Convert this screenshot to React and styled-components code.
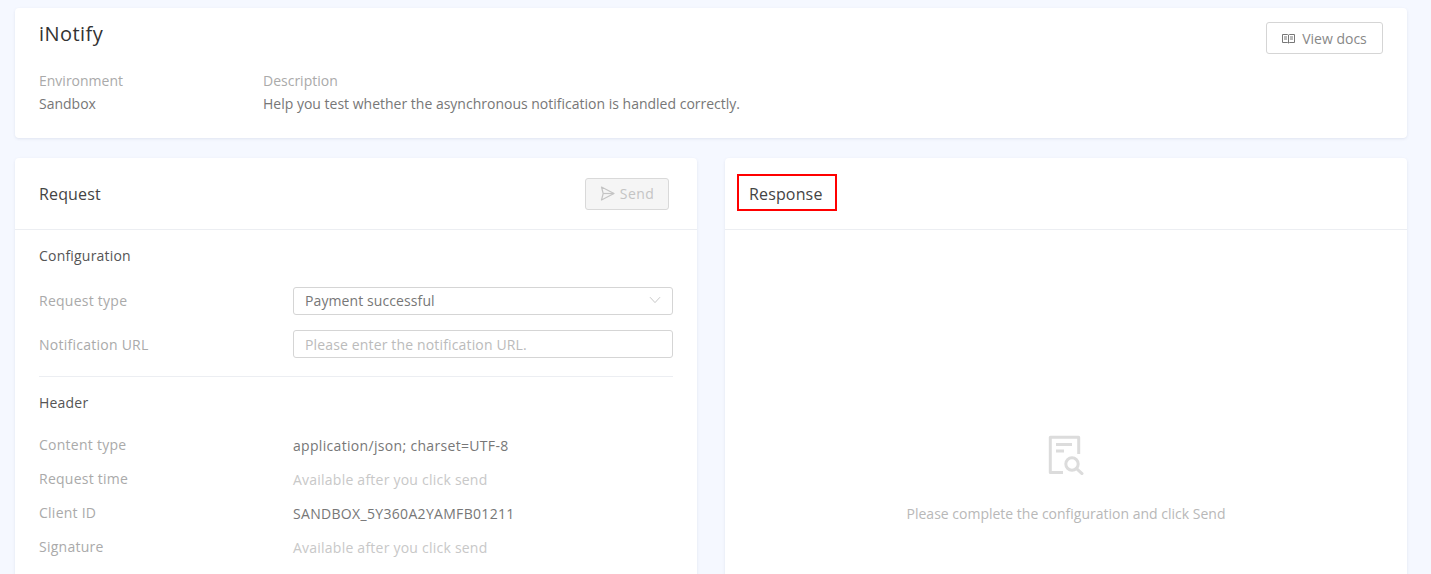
import React from 'react';
import styled, { createGlobalStyle } from 'styled-components';

const GlobalStyle = createGlobalStyle`
  html, body {
    margin: 0;
    height: 574px;
    overflow: hidden;
    background: #f5f8ff;
    font-family: "Open Sans", "Noto Sans", sans-serif;
    font-size: 14px;
    color: #666;
  }
  * { box-sizing: border-box; }
`;

const Page = styled.div`
  padding: 8px 24px 0 15px;
  display: flex;
  flex-direction: column;
  gap: 20px;
`;

const Card = styled.section`
  background: #fff;
  border-radius: 4px;
  box-shadow: 0 1px 3px rgba(40, 60, 110, 0.1);
`;

const InfoCard = styled(Card)`
  height: 130px;
  padding: 14px 24px 0;
`;

const InfoTop = styled.div`
  display: flex;
  align-items: flex-start;
  justify-content: space-between;
`;

const AppTitle = styled.h1`
  margin: 0;
  font-size: 20px;
  line-height: 24px;
  font-weight: 400;
  letter-spacing: 0.45px;
  color: #333;
`;

const DocsButton = styled.button`
  width: 117px;
  height: 32px;
  display: flex;
  align-items: center;
  justify-content: center;
  gap: 7px;
  background: #fff;
  border: 1px solid #d5d5d5;
  border-radius: 3px;
  font: inherit;
  color: #888;
`;

const InfoColumns = styled.div`
  display: grid;
  grid-template-columns: 224px 1fr;
  margin-top: 15px;
  line-height: 23px;
`;

const InfoLabel = styled.div`
  color: #aaa;
`;

const InfoValue = styled.div`
  color: #777;
`;

const Panels = styled.div`
  display: grid;
  grid-template-columns: 682px 682px;
  gap: 28px;
`;

const Panel = styled(Card)`
  height: 600px;
`;

const PanelHeader = styled.header`
  height: 72px;
  display: flex;
  align-items: center;
  justify-content: space-between;
  padding: 0 28px 0 24px;
  border-bottom: 1px solid #eceef2;
`;

const PanelTitle = styled.h2`
  margin: 0;
  font-size: 16px;
  line-height: 22px;
  font-weight: 400;
  letter-spacing: 0.15px;
  color: #444;
`;

const HighlightTitle = styled(PanelTitle)`
  width: 100px;
  height: 37px;
  margin: 0 0 2px -12px;
  padding: 2px 0 0 10px;
  display: flex;
  align-items: center;
  border: 2px solid #f00;
`;

const SendButton = styled.button`
  width: 84px;
  height: 32px;
  display: flex;
  align-items: center;
  justify-content: center;
  gap: 5px;
  background: #f5f5f5;
  border: 1px solid #d9d9d9;
  border-radius: 3px;
  font: inherit;
  letter-spacing: 0.4px;
  color: #c4c4c4;
`;

const PanelBody = styled.div`
  padding: 15px 24px 0;
`;

const SectionTitle = styled.h3`
  margin: 0;
  font-size: 14px;
  line-height: 22px;
  font-weight: 400;
  letter-spacing: 0.2px;
  color: #555;
`;

const FieldLabel = styled.div`
  padding-bottom: ${(p) => (p.$raised ? '2px' : '0')};
  letter-spacing: 0.25px;
  color: #aaa;
`;

const FormRows = styled.div`
  margin-top: 20px;
  display: flex;
  flex-direction: column;
  gap: 15px;
`;

const FormRow = styled.div`
  display: grid;
  grid-template-columns: 254px 380px;
  align-items: center;
`;

const Control = styled.div`
  height: 28px;
  display: flex;
  align-items: center;
  justify-content: space-between;
  padding: 0 11px ${(p) => (p.$placeholder ? '0' : '2px')};
  background: #fff;
  border: 1px solid #d5d5d5;
  border-radius: 3px;
  letter-spacing: ${(p) => (p.$placeholder ? '0.15px' : '0.1px')};
  color: ${(p) => (p.$placeholder ? '#bbb' : '#777')};
`;

const Divider = styled.hr`
  margin: 18px 0 15px;
  border: 0;
  border-top: 1px solid #eceef2;
`;

const DetailRows = styled.div`
  margin-top: 14px;
  display: flex;
  flex-direction: column;
`;

const DetailRow = styled.div`
  height: 34px;
  display: grid;
  grid-template-columns: 254px 1fr;
  align-items: center;
`;

const DetailValue = styled.div`
  letter-spacing: ${(p) => (p.$muted ? '0.23px' : '0.32px')};
  color: ${(p) => (p.$muted ? '#c8c8c8' : '#777')};
`;

const EmptyState = styled.div`
  padding-top: 205px;
  display: flex;
  flex-direction: column;
  align-items: center;
  gap: 29px;
  color: #b8b8b8;
`;

const BookIcon = () => (
  <svg width="13" height="11" viewBox="0 0 13 11" fill="none" stroke="#777" strokeWidth="1">
    <path d="M.5 1.5h5l1 .6 1-.6h5v8h-5l-1 .5-1-.5h-5z" />
    <path d="M6.5 2v8M2 4h3M2 6h3M8 4h3M8 6h3" />
  </svg>
);

const SendIcon = () => (
  <svg width="15" height="15" viewBox="0 0 15 15" fill="none" stroke="#c4c4c4" strokeWidth="1.2" strokeLinejoin="round">
    <path d="M1.5 1 14 7.5 1.5 14 3.2 7.5z" />
    <path d="M3.2 7.5H14" />
  </svg>
);

const Chevron = () => (
  <svg width="12" height="8" viewBox="0 0 12 8" fill="none" stroke="#c8c8c8" strokeWidth="1">
    <path d="M1 1.2 6 6.6l5-5.4" />
  </svg>
);

const EmptyIcon = () => (
  <svg width="36" height="40" viewBox="0 0 36 40" fill="none" stroke="#dcdcdc" strokeWidth="3">
    <path d="M15 37.5H2.3V2.3h28.4V19" strokeLinejoin="round" />
    <path d="M8 9.5h16M8 16h8" />
    <circle cx="24" cy="29" r="6.2" />
    <path d="M28.6 33.6 34 38.6" strokeLinecap="round" />
  </svg>
);

const details = [
  { label: 'Content type', value: 'application/json; charset=UTF-8' },
  { label: 'Request time', value: 'Available after you click send', muted: true },
  { label: 'Client ID', value: 'SANDBOX_5Y360A2YAMFB01211' },
  { label: 'Signature', value: 'Available after you click send', muted: true },
];

export default function App() {
  return (
    <>
      <GlobalStyle />
      <Page>
        <InfoCard>
          <InfoTop>
            <AppTitle>iNotify</AppTitle>
            <DocsButton>
              <BookIcon />
              View docs
            </DocsButton>
          </InfoTop>
          <InfoColumns>
            <div>
              <InfoLabel>Environment</InfoLabel>
              <InfoValue>Sandbox</InfoValue>
            </div>
            <div>
              <InfoLabel>Description</InfoLabel>
              <InfoValue>Help you test whether the asynchronous notification is handled correctly.</InfoValue>
            </div>
          </InfoColumns>
        </InfoCard>

        <Panels>
          <Panel>
            <PanelHeader>
              <PanelTitle>Request</PanelTitle>
              <SendButton>
                <SendIcon />
                Send
              </SendButton>
            </PanelHeader>
            <PanelBody>
              <SectionTitle>Configuration</SectionTitle>
              <FormRows>
                <FormRow>
                  <FieldLabel $raised>Request type</FieldLabel>
                  <Control>
                    Payment successful
                    <Chevron />
                  </Control>
                </FormRow>
                <FormRow>
                  <FieldLabel>Notification URL</FieldLabel>
                  <Control $placeholder>Please enter the notification URL.</Control>
                </FormRow>
              </FormRows>
              <Divider />
              <SectionTitle>Header</SectionTitle>
              <DetailRows>
                {details.map((row) => (
                  <DetailRow key={row.label}>
                    <FieldLabel $raised>{row.label}</FieldLabel>
                    <DetailValue $muted={row.muted}>{row.value}</DetailValue>
                  </DetailRow>
                ))}
              </DetailRows>
            </PanelBody>
          </Panel>

          <Panel>
            <PanelHeader>
              <HighlightTitle>Response</HighlightTitle>
            </PanelHeader>
            <EmptyState>
              <EmptyIcon />
              Please complete the configuration and click Send
            </EmptyState>
          </Panel>
        </Panels>
      </Page>
    </>
  );
}
